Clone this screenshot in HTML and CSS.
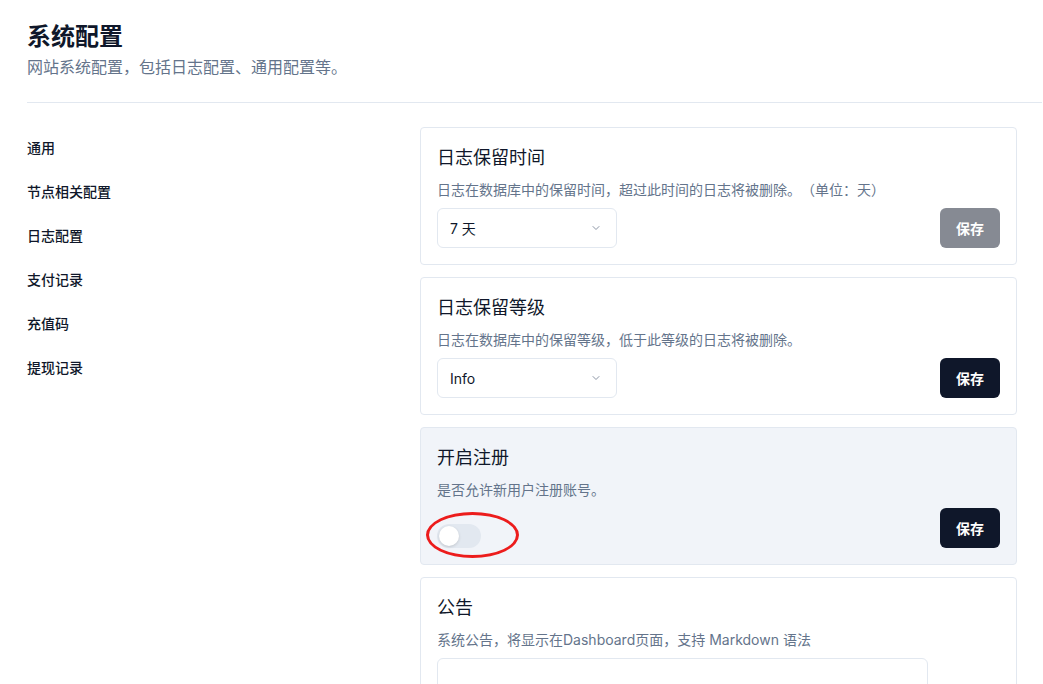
FILE: index.html
```html
<!DOCTYPE html>
<html lang="zh-CN">
<head>
    <meta charset="UTF-8">
    <meta name="viewport" content="width=device-width, initial-scale=1.0">
    <title>系统配置</title>
    <link rel="stylesheet" href="styles.css">
</head>
<body>
    <div class="page">
        <header class="header">
            <h1>系统配置</h1>
            <p>网站系统配置，包括日志配置、通用配置等。</p>
        </header>
        <div class="divider"></div>
        <div class="layout">
            <nav class="sidebar">
                <a class="navItem">通用</a>
                <a class="navItem">节点相关配置</a>
                <a class="navItem">日志配置</a>
                <a class="navItem">支付记录</a>
                <a class="navItem">充值码</a>
                <a class="navItem">提现记录</a>
            </nav>
            <main class="content">
                <section class="card">
                    <h3 class="cardTitle">日志保留时间</h3>
                    <p class="cardDesc">日志在数据库中的保留时间，超过此时间的日志将被删除。（单位：天）</p>
                    <div class="cardRow">
                        <div class="select">
                            <span>7 天</span>
                            <svg class="chevron" width="12" height="12" viewBox="0 0 24 24" fill="none" stroke="currentColor" stroke-width="2" stroke-linecap="round" stroke-linejoin="round"><path d="m6 9 6 6 6-6"/></svg>
                        </div>
                        <button class="saveBtn disabled">保存</button>
                    </div>
                </section>
                <section class="card">
                    <h3 class="cardTitle">日志保留等级</h3>
                    <p class="cardDesc">日志在数据库中的保留等级，低于此等级的日志将被删除。</p>
                    <div class="cardRow">
                        <div class="select">
                            <span>Info</span>
                            <svg class="chevron" width="12" height="12" viewBox="0 0 24 24" fill="none" stroke="currentColor" stroke-width="2" stroke-linecap="round" stroke-linejoin="round"><path d="m6 9 6 6 6-6"/></svg>
                        </div>
                        <button class="saveBtn">保存</button>
                    </div>
                </section>
                <section class="card active">
                    <h3 class="cardTitle">开启注册</h3>
                    <p class="cardDesc">是否允许新用户注册账号。</p>
                    <div class="cardRow">
                        <div class="switchWrap">
                            <span class="switch"><span class="knob"></span></span>
                            <span class="mark"></span>
                        </div>
                        <button class="saveBtn">保存</button>
                    </div>
                </section>
                <section class="card">
                    <h3 class="cardTitle">公告</h3>
                    <p class="cardDesc">系统公告，将显示在Dashboard页面，支持 Markdown 语法</p>
                    <textarea class="notice"></textarea>
                </section>
            </main>
        </div>
    </div>
</body>
</html>
```

FILE: styles.css
```css
body {
    margin: 0;
    font-family: Inter, "Noto Sans CJK SC", sans-serif;
    color: #0f172a;
    background: #ffffff;
    text-spacing-trim: space-all;
}
.page {
    padding: 21px 1px 0 27px;
}
.header h1 {
    margin: 0;
    font-size: 24px;
    line-height: 32px;
    font-weight: 700;
}
.header p {
    margin: 2px 0 0;
    font-size: 16px;
    line-height: 24px;
    color: #64748b;
}
.divider {
    height: 1px;
    background: #e2e8f0;
    margin-top: 23px;
}
.layout {
    display: flex;
    gap: 48px;
    margin-top: 24px;
}
.sidebar {
    width: 345px;
    display: flex;
    flex-direction: column;
    margin-top: -1px;
}
.navItem {
    font-size: 14px;
    line-height: 20px;
    font-weight: 500;
    padding: 12px 0;
    cursor: pointer;
}
.content {
    width: 597px;
    display: flex;
    flex-direction: column;
    gap: 12px;
}
.card {
    border: 1px solid #e2e8f0;
    border-radius: 4px;
    padding: 16px;
    display: flex;
    flex-direction: column;
    gap: 8px;
    background: #ffffff;
}
.card.active {
    background: #f1f4f9;
}
.cardTitle {
    margin: 0;
    font-size: 18px;
    line-height: 28px;
    font-weight: 400;
}
.cardDesc {
    margin: 0;
    font-size: 14px;
    line-height: 20px;
    color: #64748b;
}
.cardRow {
    display: flex;
    justify-content: space-between;
    align-items: flex-end;
}
.select {
    width: 180px;
    height: 40px;
    box-sizing: border-box;
    border: 1px solid #e2e8f0;
    border-radius: 6px;
    padding: 0 12px;
    display: flex;
    align-items: center;
    justify-content: space-between;
    font-size: 14px;
    background: #ffffff;
}
.chevron {
    color: #8b95a5;
    margin-right: 2px;
}
.saveBtn {
    width: 60px;
    height: 40px;
    border: none;
    border-radius: 6px;
    background: #0f172a;
    color: #ffffff;
    font-family: inherit;
    font-size: 14px;
    font-weight: 600;
    cursor: pointer;
}
.saveBtn.disabled {
    opacity: 0.5;
    cursor: not-allowed;
}
.switchWrap {
    position: relative;
    width: 44px;
    height: 24px;
}
.switch {
    display: block;
    width: 44px;
    height: 24px;
    box-sizing: border-box;
    border-radius: 12px;
    background: #e2e8f0;
    padding: 2px;
}
.knob {
    display: block;
    width: 20px;
    height: 20px;
    border-radius: 50%;
    background: #ffffff;
    box-shadow: 0 1px 3px rgba(0, 0, 0, 0.15);
}
.mark {
    position: absolute;
    left: -11px;
    top: -12px;
    width: 93px;
    height: 46px;
    box-sizing: border-box;
    border: 3px solid #ec1c1c;
    border-radius: 50%;
}
.notice {
    width: 491px;
    height: 120px;
    box-sizing: border-box;
    border: 1px solid #e2e8f0;
    border-radius: 6px;
    resize: none;
    font-family: inherit;
}
```
